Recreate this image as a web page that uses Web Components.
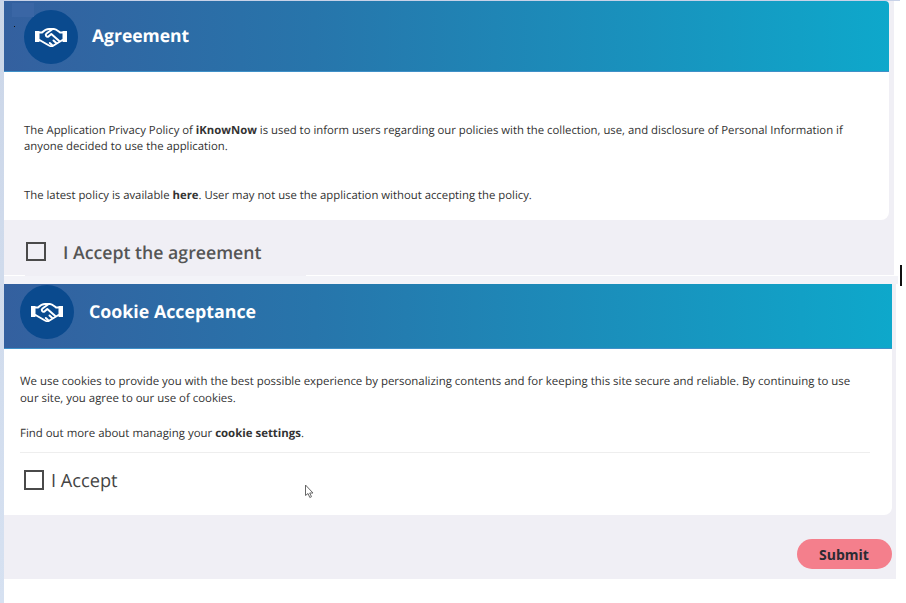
<!DOCTYPE html>
<html lang="en"><head><meta charset="utf-8"><title>Agreement</title>
<style>
html,body{margin:0;padding:0;background:#fff}
body{font-family:"Open Sans",sans-serif;color:#333;text-rendering:geometricPrecision}
</style></head><body>
<x-page>
  <x-section width="890" pad="5" header-h="71" title-size="17.500" icon-left="20" title-gap="14" top="1" corner="4" shift="0" icon-shift="1">
    <span slot="title">Agreement</span>
    <x-copy style="--pad:51px 20px 0;--h:148px;--fs:11.330px;--lh:16px">
      <p style="margin:0 0 33px;">The Application Privacy Policy of <b>iKnowNow</b> is used to inform users regarding our policies with the collection, use, and disclosure of Personal Information if anyone decided to use the application.</p>
      <p style="margin:0">The latest policy is available <b>here</b>. User may not use the application without accepting the policy.</p>
    </x-copy>
    <x-accept slot="after" class="outer">I Accept the agreement</x-accept>
  </x-section>
  <x-divider></x-divider>
  <x-section width="892" pad="4" header-h="65" title-size="17.800" icon-left="16" title-gap="15" top="0" corner="0" shift="8" icon-shift="0">
    <span slot="title">Cookie Acceptance</span>
    <x-copy style="--pad:24px 20px 0 16px;--h:166px;--fs:11.430px;--lh:17px">
      <p style="margin:0 0 18px;width:836px">We use cookies to provide you with the best possible experience by personalizing contents and for keeping this site secure and reliable. By continuing to use our site, you agree to our use of cookies.</p>
      <p style="margin:0">Find out more about managing your <b>cookie settings</b>.</p>
      <x-accept class="inner">I Accept</x-accept>
    </x-copy>
    <x-submit slot="after">Submit</x-submit>
  </x-section>
</x-page>
<script>
const handshake=`<svg width="32" height="20" viewBox="0 0 32 20" aria-hidden="true">
<path d="M0 4h4.500v11H0z" fill="#fff"/><path d="M27.500 4H32v11h-4.500z" fill="#fff"/>
<g fill="none" stroke="#fff" stroke-width="2" stroke-linecap="round" stroke-linejoin="round">
<path d="M4.500 5.500H7C9 3.500 11 2 14 2H19C21 2 23 4 25 5.500H27.500"/>
<path d="M4.500 13L14 18.500C15.500 19.400 17 19.400 18.500 18.500L27.500 13"/>
<path d="M17 2.500L11.500 6.500C9.800 8 11.500 10.500 13.500 9.500L16.300 7L24 13.800"/>
<path d="M21 15.800L18.500 13.500M17 18L14.800 16"/>
</g></svg>`;
function def(name,html,init){customElements.define(name,class extends HTMLElement{
  connectedCallback(){if(this.shadowRoot)return;const r=this.attachShadow({mode:"open"});r.innerHTML=html(this);init&&init(this,r);}
});}
def("x-page",()=>`<style>
:host{display:flex;position:relative;height:603px;width:906px;overflow:hidden}
.strip{width:4px;flex:none;background:linear-gradient(#cbd6e8,#d6e1f1)}
.main{display:flex;flex-direction:column;flex:1;min-width:0}
.top{position:absolute;left:0;top:0;width:900px;height:1px;background:#c8d2e8}
.dot{position:absolute;left:14px;top:26px;width:1px;height:1px;background:#111}
.sq{position:absolute;left:12px;top:3px;width:22px;height:14px;background:#3a66a5}
.tick{position:absolute;left:900px;top:265px;width:1.500px;height:21px;background:#111}
.cursor{position:absolute;left:304px;top:484px}
</style><div class="strip"></div><div class="main"><slot></slot></div>
<div class="top"></div><div class="sq"></div><div class="dot"></div><div class="tick"></div>
<svg class="cursor" width="11" height="15" viewBox="0 0 11 15" aria-hidden="true"><path d="M1.500 1V11.500L4 9.500L5.800 13.500L7.500 12.700L5.700 9H9z" fill="#fff" stroke="#666" stroke-width="1"/></svg>`);
def("x-section",h=>{const a=n=>h.getAttribute(n);
return `<style>
:host{display:block;width:${a("width")}px;background:#f0eff5;box-sizing:border-box;padding:${a("top")}px ${a("pad")}px 0 0}
.card{background:#fff;border-radius:0 ${a("corner")}px 8px 0;overflow:hidden}
header{height:${a("header-h")}px;display:flex;align-items:center;gap:${a("title-gap")}px;padding:0 0 ${a("shift")}px ${a("icon-left")}px;background:linear-gradient(90deg,#34609f 0%,#2775ab 35%,#0ea8cb 100%);box-sizing:border-box;border-bottom:1px solid #3f90c8;color:#fff;font-weight:700;font-size:${a("title-size")}px}
.ic{width:54px;height:54px;border-radius:50%;background:#0a4a8e;display:flex;align-items:center;justify-content:center;flex:none;margin-top:${a("icon-shift")*2}px}
</style><div class="card"><header><div class="ic">${handshake}</div><slot name="title"></slot></header><slot></slot></div><slot name="after"></slot>`});
def("x-copy",()=>`<style>
:host{display:block;box-sizing:border-box;height:var(--h);padding:var(--pad);font-size:var(--fs);line-height:var(--lh);color:#333}
</style><slot></slot>`);
def("x-accept",h=>{const inner=h.classList.contains("inner");return `<style>
:host{display:flex;align-items:center;font-size:${inner?18.200:17.700}px;font-weight:${inner?400:600};color:#555;box-sizing:border-box;
${inner?"border-top:1px solid #eee;margin:10px 2px 0 0;height:55px;gap:7px;padding:2px 0 0 4px;color:#444":"height:55px;gap:17px;padding:11px 0 0 22px"}}
i{display:block;width:20px;height:${inner?20:19}px;border:2px solid #4a4a4a;box-sizing:border-box;margin-top:${inner?-2:-4}px}
</style><i></i><slot></slot>`});
def("x-divider",()=>`<style>
:host{display:block;width:894px;height:9px;background:#f3f3f8;border-top:1px solid #fff;box-sizing:border-box;position:relative}
b{position:absolute;left:21px;top:-1px;width:281px;height:1px;background:#f0eff5}
</style><b></b>`);
def("x-submit",()=>`<style>
:host{display:flex;justify-content:flex-end;height:64px;padding:24px 0 0;box-sizing:border-box}
button{width:95px;height:30px;border:0;border-radius:15px;background:#f47f8c;color:#2b2b33;font:700 14px "Open Sans",sans-serif;padding:0 1px 0 0}
</style><button><slot></slot></button>`);
</script>
</body></html>
